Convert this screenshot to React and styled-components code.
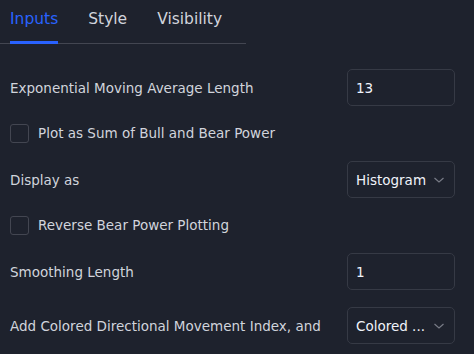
import React, { useState } from 'react';
import styled, { createGlobalStyle } from 'styled-components';

const GlobalStyle = createGlobalStyle`
  html, body {
    margin: 0;
    padding: 0;
    background: #1e222d;
  }
  body {
    font-family: "DejaVu Sans", "Noto Sans", sans-serif;
    color: #d1d4dc;
    overflow: hidden;
  }
`;

const Panel = styled.div`
  width: 474px;
  height: 354px;
  background: #1e222d;
  display: flex;
  flex-direction: column;
`;

const TabBar = styled.div`
  display: flex;
  gap: 30px;
  width: 246px;
  height: 44px;
  padding-left: 10px;
  box-sizing: border-box;
  border-bottom: 1px solid #434651;
`;

const Tab = styled.button`
  background: none;
  border: none;
  padding: 0;
  font-family: inherit;
  font-size: 15.5px;
  color: ${(p) => (p.active ? '#2962ff' : '#d1d4dc')};
  height: 44px;
  margin-bottom: -1px;
  box-sizing: border-box;
  padding-bottom: 3px;
  border-bottom: 3px solid ${(p) => (p.active ? '#2962ff' : 'transparent')};
  cursor: pointer;
`;

const Form = styled.div`
  display: flex;
  flex-direction: column;
  gap: 18px;
  padding: 25px 19px 0 10px;
`;

const Row = styled.div`
  display: grid;
  grid-template-columns: 1fr 108px;
  align-items: center;
  height: 36px;
`;

const Label = styled.span`
  font-size: 13.5px;
  white-space: nowrap;
`;

const TextInput = styled.input`
  box-sizing: border-box;
  width: 108px;
  height: 37px;
  background: #1e222d;
  border: 1px solid #363a45;
  border-radius: 5px;
  padding: 0 8px;
  color: #f0f3fa;
  font-family: inherit;
  font-size: 13.5px;
  outline: none;
`;

const Select = styled.div`
  box-sizing: border-box;
  width: 108px;
  height: 37px;
  border: 1px solid #363a45;
  border-radius: 5px;
  padding: 0 9px 0 8px;
  display: flex;
  align-items: center;
  justify-content: space-between;
  color: #f0f3fa;
  font-size: 13.5px;
`;

const SelectText = styled.span`
  white-space: nowrap;
  overflow: hidden;
`;

const CheckRow = styled.label`
  display: flex;
  align-items: center;
  gap: 9px;
  height: 20px;
  cursor: pointer;
`;

const Box = styled.span`
  box-sizing: border-box;
  width: 19px;
  height: 19px;
  border: 1px solid #434651;
  border-radius: 3px;
`;

const Chevron = () => (
  <svg width="12" height="8" viewBox="0 0 12 8" fill="none">
    <path d="M1.5 2l4.5 4 4.5-4" stroke="#787b86" strokeWidth="1.2" />
  </svg>
);

const App = () => {
  const [tab, setTab] = useState('Inputs');
  const [ema, setEma] = useState('13');
  const [smooth, setSmooth] = useState('1');

  return (
    <Panel>
      <GlobalStyle />
      <TabBar>
        {['Inputs', 'Style', 'Visibility'].map((t) => (
          <Tab key={t} active={tab === t} onClick={() => setTab(t)}>
            {t}
          </Tab>
        ))}
      </TabBar>
      <Form>
        <Row>
          <Label>Exponential Moving Average Length</Label>
          <TextInput value={ema} onChange={(e) => setEma(e.target.value)} />
        </Row>
        <CheckRow>
          <Box />
          <Label>Plot as Sum of Bull and Bear Power</Label>
        </CheckRow>
        <Row>
          <Label>Display as</Label>
          <Select>
            <SelectText>Histogram</SelectText>
            <Chevron />
          </Select>
        </Row>
        <CheckRow>
          <Box />
          <Label>Reverse Bear Power Plotting</Label>
        </CheckRow>
        <Row>
          <Label>Smoothing Length</Label>
          <TextInput value={smooth} onChange={(e) => setSmooth(e.target.value)} />
        </Row>
        <Row>
          <Label>Add Colored Directional Movement Index, and</Label>
          <Select>
            <SelectText>Colored ...</SelectText>
            <Chevron />
          </Select>
        </Row>
      </Form>
    </Panel>
  );
};

export default App;
